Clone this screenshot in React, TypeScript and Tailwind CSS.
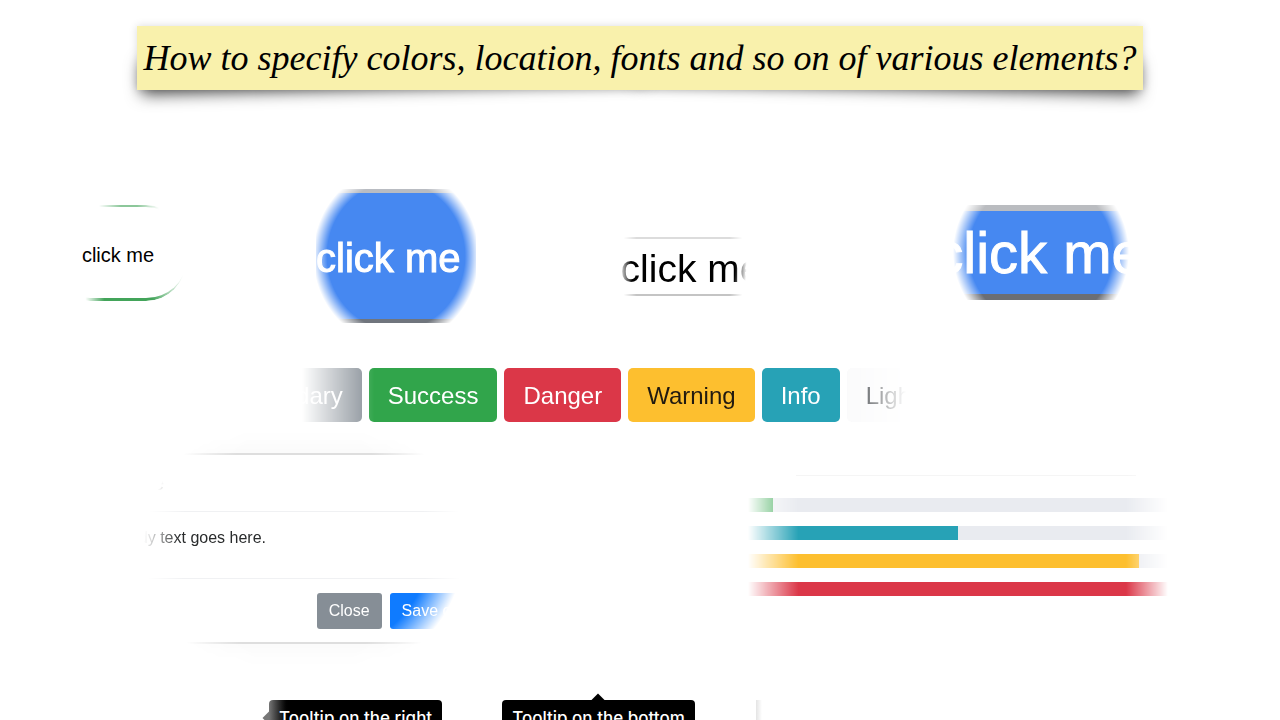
import React from "react";

type Variant = { label: string; tone: string };

const variants: Variant[] = [
  { label: "Secondary", tone: "bg-[#868e96] text-white" },
  { label: "Success", tone: "bg-[#31a54b] text-white" },
  { label: "Danger", tone: "bg-[#db3748] text-white" },
  { label: "Warning", tone: "bg-[#fdbf2f] text-[#211a10]" },
  { label: "Info", tone: "bg-[#27a2b6] text-white" },
  { label: "Light", tone: "bg-[#fafafb] text-[#212529]" },
];

const bars = [
  { name: "Green", value: 6, fill: "bg-[#31a54b]" },
  { name: "Teal", value: 50, fill: "bg-[#27a2b6]" },
  { name: "Yellow", value: 93, fill: "bg-[#fdbf2f]" },
  { name: "Red", value: 100, fill: "bg-[#db3748]" },
];

function Banner() {
  return (
    <header className="flex justify-center pt-[26px]">
      <div className="relative isolate">
        <span className="absolute bottom-3 left-1 -z-10 h-8 w-1/2 rotate-[-1.5deg] shadow-[0_10px_16px_rgba(0,0,0,0.7)]" />
        <span className="absolute right-1 bottom-3 -z-10 h-8 w-1/2 rotate-[1.5deg] shadow-[0_10px_16px_rgba(0,0,0,0.7)]" />
        <h1 className="bg-[#f9f1ac] px-[7px] text-center font-['Apple_Chancery','Z003','URW_Chancery_L','Liberation_Serif',serif] text-4xl leading-[64px] whitespace-nowrap text-black italic shadow-[0_0_8px_rgba(0,0,0,0.15)]">
          How to specify colors, location, fonts and so on of various elements?
        </h1>
      </div>
    </header>
  );
}

function ClickButtons() {
  return (
    <section className="grid h-[134px] grid-cols-[236fr_320fr_254fr_462fr] items-start justify-items-center pr-2">
      <button className="relative mt-4 h-24 w-[136px] pt-1 text-xl text-black">
        <span className="absolute inset-x-0 top-0 h-1/2 rounded-t-[40px] border-t-2 border-[#8cc79a] [mask-image:linear-gradient(to_right,transparent_36%,black_52%,black_64%,transparent_80%)]" />
        <span className="absolute inset-x-0 bottom-0 h-1/2 rounded-b-[40px] border-b-[3px] border-[#43a45a] [mask-image:linear-gradient(to_right,transparent_26%,black_40%,black_75%,transparent_98%)]" />
        click me
      </button>
      <button className="h-[134px] w-40 border-t-4 border-b-4 border-t-[#b9bcc2] border-b-[#70757d] bg-[#4688f1] pt-1 pr-4 text-[40px] whitespace-nowrap text-white [-webkit-text-stroke:1px_white] [mask-image:radial-gradient(82px_88px_at_center,black_84%,transparent_101%)]">
        click me
      </button>
      <button className="mt-12 h-[59px] w-[158px] border-t-2 border-b-2 border-t-[#dcdcdc] border-b-[#c4c4c4] pt-1 pl-4 text-[39px] leading-none whitespace-nowrap text-black [mask-image:radial-gradient(65px_80px_at_center,black_80%,transparent_98%)]">
        click me
      </button>
      <button className="mt-4 h-[95px] w-[220px] border-t-6 border-b-6 border-t-[#babcc0] border-b-[#6b6e74] bg-[#4688f1] pr-1 text-[58px] leading-none whitespace-nowrap text-white [-webkit-text-stroke:1px_white] [mask-image:radial-gradient(88px_88px_at_center,black_82%,transparent_100%)]">
        click me
      </button>
    </section>
  );
}

function VariantButtons() {
  return (
    <section className="flex gap-[7px] pl-[209px] [mask-image:linear-gradient(to_right,transparent_302px,black_374px,black_842px,transparent_906px)]">
      {variants.map((v) => (
        <button key={v.label} className={`h-[54px] rounded-[5px] px-[19px] pt-[2px] text-2xl ${v.tone}`}>
          {v.label}
        </button>
      ))}
    </section>
  );
}

function Modal() {
  return (
    <div className="w-[530px] shrink-0 p-6 [mask-image:radial-gradient(157px_138px_at_279px_118px,black_80%,transparent_102%)]">
      <div className="border-y-2 border-[#dedede] bg-white text-base shadow-[0_0_30px_rgba(0,0,0,0.04)]">
        <h2 className="border-b border-[#f0f1f3] px-6 text-xl leading-[56px]">Modal title</h2>
        <p className="border-b border-[#f0f1f3] px-6 pt-[14px] pb-7 leading-6 text-[#292b2c]">
          Modal body text goes here.
        </p>
        <div className="flex justify-end gap-2 px-4 pt-[14px] pb-[13px] text-white">
          <button className="h-9 rounded-[3px] bg-[#868e96] px-3">Close</button>
          <button className="h-9 rounded-[3px] bg-[#0f7bff] px-3">Save changes</button>
        </div>
      </div>
    </div>
  );
}

function ProgressBars() {
  return (
    <div className="mr-28 w-[420px] pt-[46px] [mask-image:linear-gradient(to_right,transparent,black_12%,black_90%,transparent)]">
      <hr className="mr-8 mb-[22px] ml-12 border-[#f5f5f5]" />
      <div className="flex flex-col gap-[14px]">
        {bars.map((b) => (
          <div
            key={b.name}
            role="progressbar"
            aria-label={b.name}
            aria-valuenow={b.value}
            className="h-[14px] bg-[#e9ebf0]"
          >
            <div className={`h-full ${b.fill}`} style={{ width: `${b.value}%` }} />
          </div>
        ))}
      </div>
    </div>
  );
}

function Tooltips() {
  return (
    <section className="flex items-start pt-8 pl-[269px] font-['Inter','Liberation_Sans',sans-serif] text-[17px] font-medium text-white">
      <div role="tooltip" className="relative">
        <span className="absolute top-3 -left-1 size-3 rotate-45 bg-[#777]" />
        <div className="relative rounded bg-linear-to-r from-[#777] to-black to-12% px-[10px] py-1 leading-7">
          Tooltip on the right
        </div>
      </div>
      <div role="tooltip" className="relative ml-[60px]">
        <span className="absolute -top-1 left-1/2 size-3 -translate-x-1/2 rotate-45 bg-black" />
        <div className="relative rounded bg-black px-[10px] py-1 leading-7">Tooltip on the bottom</div>
      </div>
      <div className="ml-[61px] h-9 w-[6px] bg-linear-to-r from-[#e4e4e4] to-white" />
    </section>
  );
}

export default function App() {
  return (
    <main className="h-screen overflow-hidden bg-white font-['Liberation_Sans',Arial,sans-serif]">
      <Banner />
      <div className="pt-[99px]">
        <ClickButtons />
      </div>
      <div className="pt-[45px]">
        <VariantButtons />
      </div>
      <section className="flex items-start justify-between pt-[7px] pl-[25px]">
        <Modal />
        <ProgressBars />
      </section>
      <Tooltips />
    </main>
  );
}
